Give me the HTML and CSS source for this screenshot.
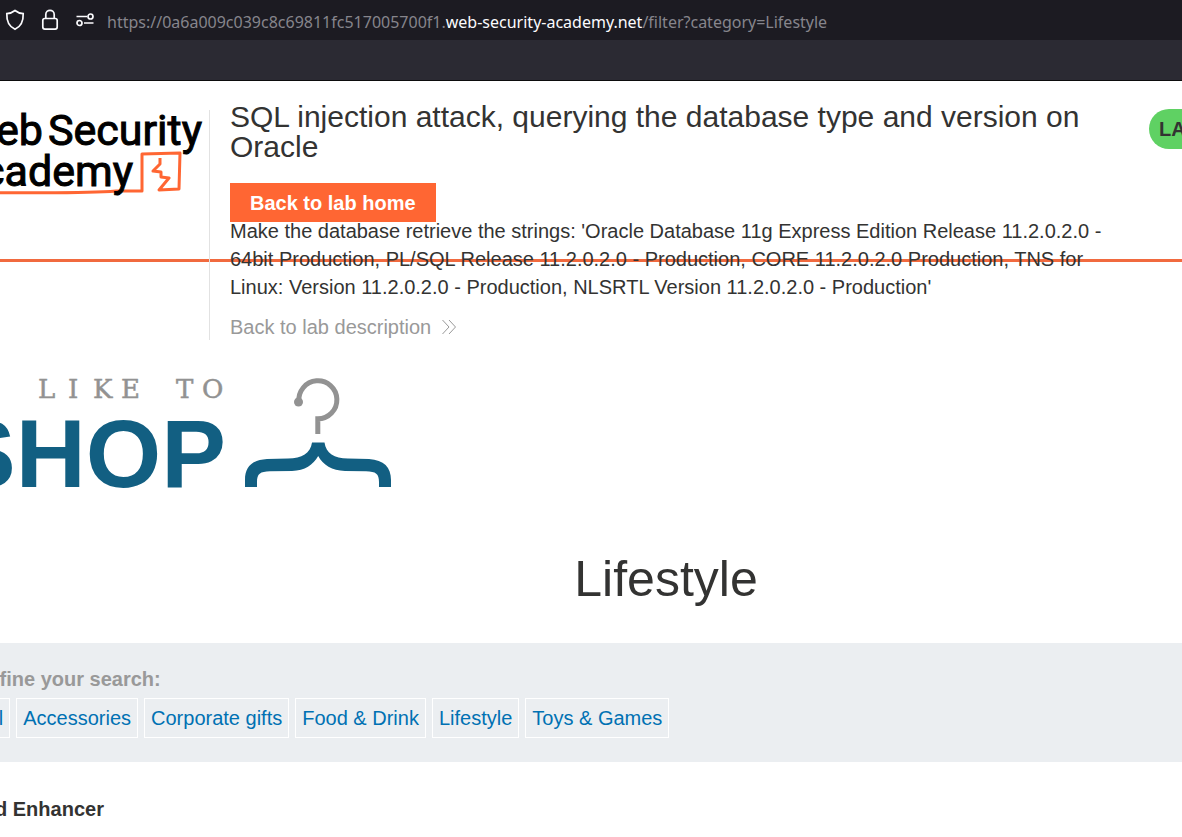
FILE: index.html
```
<!DOCTYPE html>
<html lang="en">
<head>
    <meta charset="UTF-8">
    <meta name="viewport" content="width=device-width, initial-scale=1.0">
    <title>SQL injection attack, querying the database type and version on Oracle</title>
    <link rel="stylesheet" href="styles.css">
</head>
<body>
    <div class="browser-bar">
        <svg class="bar-icon" width="20" height="22" viewBox="0 0 20 22">
            <path d="M10 1.5 C12.5 3.6 15.5 4.4 18.2 4.6 C18.5 12 16 17.5 10 20.3 C4 17.5 1.5 12 1.8 4.6 C4.5 4.4 7.5 3.6 10 1.5 Z"/>
        </svg>
        <svg class="bar-icon" width="18" height="22" viewBox="0 0 18 22">
            <rect x="1.8" y="9.5" width="14.4" height="10.6" rx="2"/>
            <path d="M4.8 9.5 V5.5 C4.8 0 13.2 0 13.2 5.5 V9.5"/>
        </svg>
        <svg class="bar-icon" width="20" height="22" viewBox="0 0 20 22">
            <path d="M1.5 7.5 H12 M9 14 H18.5"/>
            <circle cx="15.5" cy="7.5" r="2.5"/>
            <circle cx="4.5" cy="14" r="2.5"/>
        </svg>
        <div class="url">https://0a6a009c039c8c69811fc517005700f1.<span class="domain">web-security-academy.net</span>/filter?category=Lifestyle</div>
    </div>
    <div class="bookmarks-bar"></div>

    <div class="viewport">
        <div class="page">
            <header class="lab-header">
                <div class="logo">
                    <svg width="235" height="100" viewBox="-26 110 235 100" role="img" aria-label="Web Security Academy">
                        <path class="logo-line" d="M-26 193 C30 192 80 194 116 191 L142 191 L142 154 L180 153 L179 189 L159 190 L169 178 L161 177 L161 172 L153 171 L160 164 L160 158"/>
                        <text class="logo-text" x="43" y="145" text-anchor="end">Web</text>
                        <text class="logo-text" x="202" y="145" text-anchor="end">Security</text>
                        <text class="logo-text" x="133" y="186" text-anchor="end">Academy</text>
                    </svg>
                </div>
                <div class="title-container">
                    <h2>SQL injection attack, querying the database type and version on Oracle</h2>
                    <a class="button" href="#">Back to lab home</a>
                    <p>Make the database retrieve the strings: 'Oracle Database 11g Express Edition Release 11.2.0.2.0 - 64bit Production, PL/SQL Release 11.2.0.2.0 - Production, CORE 11.2.0.2.0 Production, TNS for Linux: Version 11.2.0.2.0 - Production, NLSRTL Version 11.2.0.2.0 - Production'</p>
                    <a class="link-back" href="#">Back to lab description
                        <svg width="16" height="16" viewBox="0 0 16 16"><path d="M1.5 1 L8 8 L1.5 15 M8 1 L14.5 8 L8 15"/></svg>
                    </a>
                </div>
                <div class="status"><span class="badge">LAB</span></div>
            </header>

            <section class="shop-banner">
                <svg width="420" height="120" viewBox="-26 374 420 120" role="img" aria-label="We like to shop">
                    <text class="like" x="38 68 93 121 176 202" y="398">LIKETO</text>
                    <text class="shop" x="-49" y="487">SHOP</text>
                    <path class="hook" d="M299 402 A19 19 0 1 1 317.8 418.8 V434"/>
                    <circle class="hook-end" cx="298.5" cy="402" r="4.5"/>
                    <path class="hanger" d="M312 442.5 H324.5 C326 453 334 458.5 348 458.5 L369 459 C384 460 391 467 391 480 V487 H379 V482 C379 474 376 471.5 366 471.3 L345 471 C332 470.5 323 465 318.2 456 C313 465 305 470.5 292 471 L270 471.3 C260 471.5 257 474 257 482 V487 H245 V480 C245 467 252 460 267 459 L288 458.5 C302 458.5 310.5 453 312 442.5 Z"/>
                </svg>
            </section>

            <h1>Lifestyle</h1>

            <section class="search-filters">
                <h3>Refine your search:</h3>
                <nav>
                    <a href="#">All</a>
                    <a href="#">Accessories</a>
                    <a href="#">Corporate gifts</a>
                    <a href="#">Food &amp; Drink</a>
                    <a href="#">Lifestyle</a>
                    <a href="#">Toys &amp; Games</a>
                </nav>
            </section>

            <table>
                <tr><th>d Enhancer</th></tr>
            </table>
        </div>
    </div>
</body>
</html>
```
FILE: styles.css
```
* {
    box-sizing: border-box;
}

body {
    margin: 0;
    background-color: #fff;
    color: #333332;
    font-family: "Liberation Sans", Arial, sans-serif;
    font-size: 20px;
    line-height: 28px;
}

.browser-bar {
    display: flex;
    align-items: center;
    height: 40px;
    padding-left: 5px;
    background-color: #1c1b22;
}

.bar-icon {
    flex: none;
    margin-right: 16px;
    fill: none;
    stroke: #fbfbfe;
    stroke-width: 1.7;
}

.url {
    margin-left: -4px;
    padding-top: 3px;
    color: #86858c;
    font-family: "Noto Sans", "Open Sans", sans-serif;
    font-size: 16px;
    white-space: nowrap;
}

.domain {
    color: #fbfbfe;
}

.bookmarks-bar {
    height: 41px;
    background-color: #2b2a33;
    border-bottom: 1px solid #0c0c0d;
}

.viewport {
    overflow: hidden;
}

/* content is scrolled sideways inside the window */
.page {
    margin: 0 -176px 0 -26px;
}

.lab-header {
    display: flex;
    align-items: flex-start;
    height: 181px;
    padding-top: 21px;
    border-bottom: 3px solid #f16a3f;
}

.logo {
    flex: none;
    width: 236px;
    height: 230px;
    margin-top: 8px;
    border-right: 1px solid #e2e2e2;
}

.logo svg {
    display: block;
    overflow: visible;
}

.logo-text {
    fill: #000;
    stroke: #000;
    font-family: Roboto, sans-serif;
    font-size: 43px;
}

.logo-line {
    fill: none;
    stroke: #ff6633;
    stroke-width: 3;
    stroke-linejoin: round;
}

.title-container {
    flex: 1;
    padding: 0 20px;
}

h2 {
    margin: 0 0 21px;
    font-size: 30px;
    font-weight: normal;
    line-height: 30px;
}

.button {
    display: table;
    padding: 6px 20px 5px;
    background-color: #ff6633;
    color: #fff;
    font-weight: bold;
    text-decoration: none;
}

.title-container p {
    margin: -5px 0 12px;
}

.link-back {
    display: flex;
    align-items: center;
    gap: 10px;
    color: #999;
    text-decoration: none;
}

.link-back svg {
    fill: none;
    stroke: #999;
}

.status {
    flex: none;
    width: 209px;
    padding-top: 7px;
}

.badge {
    display: inline-block;
    padding: 6px 10px;
    border-radius: 20px;
    background-color: #5fd163;
    font-weight: bold;
}

.shop-banner {
    padding-top: 112px;
}

.shop-banner svg {
    display: block;
    overflow: visible;
}

.like {
    fill: #929292;
    stroke: #929292;
    stroke-width: 0.5;
    font-family: "DejaVu Serif", serif;
    font-size: 26px;
}

.shop {
    fill: #125f82;
    font-size: 97px;
    font-weight: bold;
}

.hook {
    fill: none;
    stroke: #929292;
    stroke-width: 5;
}

.hook-end {
    fill: #929292;
}

.hanger {
    fill: #125f82;
}

h1 {
    margin: 55px 0 34px;
    font-size: 50px;
    font-weight: normal;
    line-height: 60px;
    text-align: center;
}

.search-filters {
    padding: 22px 0 24px;
    background-color: #ebeef1;
}

h3 {
    margin: 0 0 5px;
    color: #999;
    font-size: 20px;
}

.search-filters nav {
    display: flex;
    gap: 6px;
}

.search-filters a {
    padding: 5px 6px;
    border: 1px solid #fff;
    color: #0071b3;
    text-decoration: none;
}

table {
    margin: 33px 0 20px 21px;
    border-collapse: collapse;
}

th {
    padding: 0;
    text-align: left;
}
```
